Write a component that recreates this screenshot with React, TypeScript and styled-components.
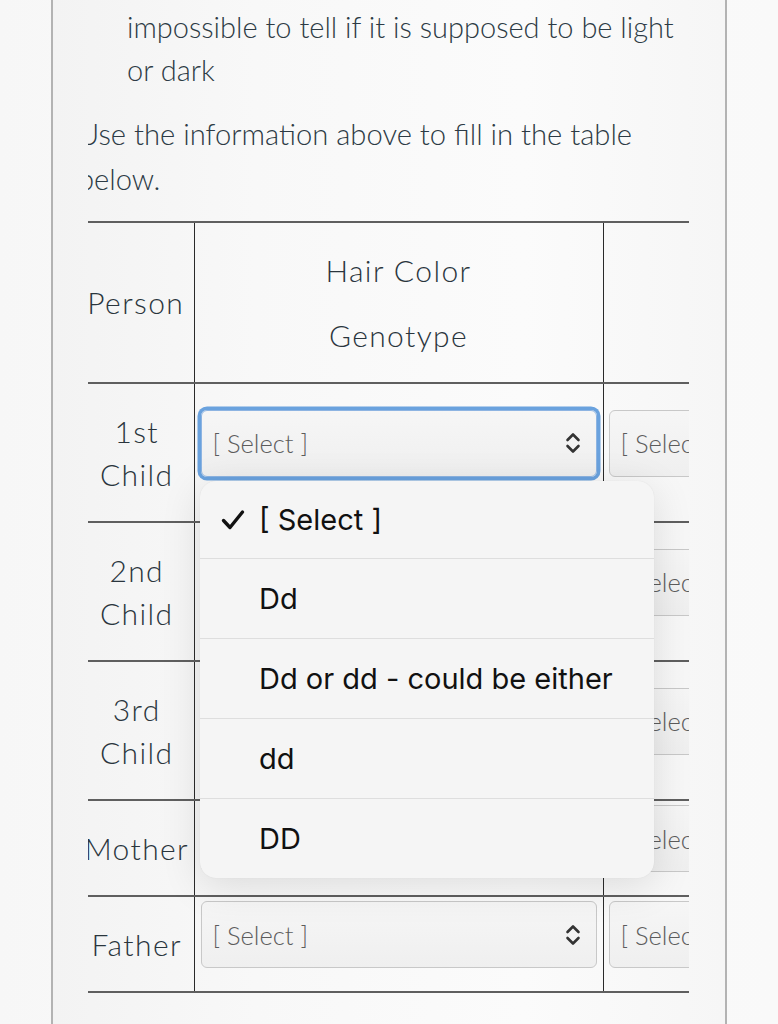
import React from "react";
import styled, { createGlobalStyle } from "styled-components";

const GlobalStyle = createGlobalStyle`
  html, body { margin: 0; padding: 0; background: #fafafa; }
  body { font-family: Lato, "Open Sans", sans-serif; }
`;

const Page = styled.div`
  padding-left: 51px;
  width: 778px;
  height: 1024px;
  box-sizing: border-box;
  overflow: hidden;
  background: linear-gradient(90deg, #f7f7f7 0%, #fbfbfb 40%, #f9f9f9 100%);
`;

const Card = styled.div`
  position: relative;
  width: 676px;
  height: 1024px;
  box-sizing: border-box;
  border-left: 2px solid #b3b3b3;
  border-right: 2px solid #b3b3b3;
  background: linear-gradient(90deg, #f3f3f3 0%, #f8f8f8 30%, #fbfbfb 70%, #f6f6f6 100%);
`;

const ListText = styled.p`
  margin: 0 0 0 74px;
  padding-top: 5px;
  width: 580px;
  font-family: Lato, sans-serif;
  font-weight: 300;
  font-size: 29px;
  line-height: 43px;
  color: #2d3b45;
`;

const Viewport = styled.div`
  margin-left: 35px;
  width: 601px;
  overflow: hidden;
`;

const Scrolled = styled.div`
  margin-left: -10px;
`;

const Para = styled.p`
  margin: 20px 0 20px 0;
  width: 610px;
  font-family: Lato, sans-serif;
  font-weight: 300;
  font-size: 29.2px;
  line-height: 45px;
  color: #2d3b45;
`;

const Table = styled.table`
  border-collapse: collapse;
  width: 735px;
  table-layout: fixed;
`;

const Row = styled.tr`
  border-top: 2px solid #5f5f5f;
  border-bottom: 2px solid #5f5f5f;
`;

const HeadCell = styled.th`
  padding: 25.5px 0;
  font-family: Lato, sans-serif;
  font-weight: 300;
  font-size: 30px;
  letter-spacing: 1.4px;
  line-height: 43px;
  color: #2a353d;
  text-align: center;
  vertical-align: middle;
  & + & { border-left: 1px solid #2a2a2a; }
`;

const HeadLine = styled.div`
  & + & { margin-top: 22px; }
`;

const PersonCell = styled.td`
  padding: 25.5px 0 25.5px 2px;
  font-family: Lato, sans-serif;
  font-weight: 300;
  font-size: 30px;
  letter-spacing: 1.4px;
  line-height: 43px;
  color: #2a353d;
  text-align: center;
  vertical-align: middle;
  white-space: pre-line;
`;

const SelectCell = styled.td<{ $pad: number }>`
  padding: 4px ${(p) => p.$pad}px;
  vertical-align: middle;
  border-left: 1px solid #2a2a2a;
`;

const SelectBox = styled.div<{ $focused?: boolean }>`
  display: flex;
  align-items: center;
  justify-content: space-between;
  height: 67px;
  box-sizing: border-box;
  margin-bottom: 19px;
  padding: 0 15px 0 11px;
  border: 1px solid ${(p) => (p.$focused ? "#8db4e2" : "#c8c8c8")};
  border-radius: 6px;
  background: linear-gradient(180deg, #f6f6f6 0%, #efefef 100%);
  box-shadow: ${(p) => (p.$focused ? "0 0 0 3.5px #6aa2de" : "none")};
  font-family: Lato, sans-serif;
  font-weight: 300;
  font-size: 25.5px;
  color: #5c5c5c;
  white-space: nowrap;
  overflow: hidden;
`;

const Menu = styled.div`
  position: absolute;
  left: 147px;
  top: 481px;
  width: 454px;
  border-radius: 16px;
  background: #f5f5f5;
  box-shadow: 0 8px 40px rgba(0, 0, 0, 0.12), 0 0 1px rgba(0, 0, 0, 0.1);
  overflow: hidden;
`;

const MenuItem = styled.div<{ $first?: boolean }>`
  display: flex;
  align-items: center;
  height: ${(p) => (p.$first ? 77 : 80)}px;
  box-sizing: border-box;
  padding-left: 21px;
  border-top: ${(p) => (p.$first ? "none" : "1.5px solid #dedede")};
  font-family: Inter, "Noto Sans", sans-serif;
  font-size: 29px;
  color: #111;
  white-space: nowrap;
`;

const CheckSlot = styled.span`
  display: inline-flex;
  width: 38px;
  align-items: center;
`;

const Chevrons = () => (
  <svg width="16" height="24" viewBox="0 0 16 24" fill="none" stroke="#333" strokeWidth="2.6" strokeLinecap="round" strokeLinejoin="round">
    <polyline points="2.5,9 8,3.5 13.5,9" />
    <polyline points="2.5,15 8,20.5 13.5,15" />
  </svg>
);

const Check = () => (
  <svg width="24" height="22" viewBox="0 0 24 22" fill="none" stroke="#111" strokeWidth="3.4" strokeLinecap="round" strokeLinejoin="round">
    <polyline points="2.5,11.5 9,18.5 21.5,3" />
  </svg>
);

const people = ["1st\nChild", "2nd\nChild", "3rd\nChild", "Mother", "Father"];
const options = ["[ Select ]", "Dd", "Dd or dd - could be either", "dd", "DD"];

export default function App() {
  return (
    <>
      <GlobalStyle />
      <Page>
        <Card>
          <ListText>impossible to tell if it is supposed to be light or dark</ListText>
          <Viewport>
            <Scrolled>
              <Para>Use the information above to fill in the table below.</Para>
              <Table>
                <colgroup>
                  <col style={{ width: 116 }} />
                  <col style={{ width: 409 }} />
                  <col style={{ width: 210 }} />
                </colgroup>
                <thead>
                  <Row>
                    <HeadCell>Person</HeadCell>
                    <HeadCell>
                      <HeadLine>Hair Color</HeadLine>
                      <HeadLine>Genotype</HeadLine>
                    </HeadCell>
                    <HeadCell> </HeadCell>
                  </Row>
                </thead>
                <tbody>
                  {people.map((p, i) => (
                    <Row key={p}>
                      <PersonCell>{p}</PersonCell>
                      <SelectCell $pad={6}>
                        <SelectBox $focused={i === 0}>
                          <span>[ Select ]</span>
                          <Chevrons />
                        </SelectBox>
                      </SelectCell>
                      <SelectCell $pad={5}>
                        <SelectBox>
                          <span>[ Select ]</span>
                          <Chevrons />
                        </SelectBox>
                      </SelectCell>
                    </Row>
                  ))}
                </tbody>
              </Table>
            </Scrolled>
          </Viewport>
          <Menu>
            {options.map((o, i) => (
              <MenuItem key={o} $first={i === 0}>
                <CheckSlot>{i === 0 ? <Check /> : null}</CheckSlot>
                {o}
              </MenuItem>
            ))}
          </Menu>
        </Card>
      </Page>
    </>
  );
}
